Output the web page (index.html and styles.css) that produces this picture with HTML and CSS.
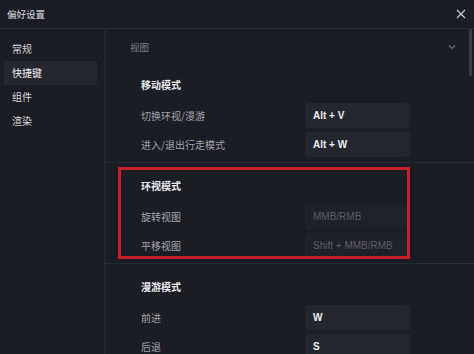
FILE: index.html
```html
<!DOCTYPE html>
<html lang="zh-CN">
<head>
  <meta charset="UTF-8">
  <title>偏好设置</title>
  <link rel="stylesheet" href="styles.css">
</head>
<body>
<div class="dialog">
  <div class="titlebar">
    <span class="title">偏好设置</span>
    <svg class="close" width="10" height="10" viewBox="0 0 10 10"><path d="M1 1L9 9M9 1L1 9" stroke="#c9cace" stroke-width="1.3"/></svg>
  </div>
  <div class="main">
    <div class="sidebar">
      <div class="nav-item">常规</div>
      <div class="nav-item active">快捷键</div>
      <div class="nav-item">组件</div>
      <div class="nav-item">渲染</div>
    </div>
    <div class="content">
      <div class="group-head">
        <span>视图</span>
        <svg width="8" height="6" viewBox="0 0 8 6"><path d="M1 1.5L4 4.5L7 1.5" fill="none" stroke="#6b6e76" stroke-width="1.1"/></svg>
      </div>
      <div class="section first">
        <div class="section-title">移动模式</div>
        <div class="row"><span class="label">切换环视/漫游</span><span class="key">Alt + V</span></div>
        <div class="row"><span class="label">进入/退出行走模式</span><span class="key">Alt + W</span></div>
      </div>
      <div class="section">
        <div class="section-title">环视模式</div>
        <div class="row"><span class="label">旋转视图</span><span class="key muted">MMB/RMB</span></div>
        <div class="row"><span class="label">平移视图</span><span class="key muted">Shift + MMB/RMB</span></div>
      </div>
      <div class="section last">
        <div class="section-title">漫游模式</div>
        <div class="row"><span class="label">前进</span><span class="key">W</span></div>
        <div class="row"><span class="label">后退</span><span class="key">S</span></div>
      </div>
      <div class="scrollbar"></div>
    </div>
  </div>
  <div class="highlight"></div>
</div>
</body>
</html>
```

FILE: styles.css
```css
body {
  margin: 0;
  background: #1b1d24;
  font-family: "Noto Sans CJK SC", "Noto Sans", sans-serif;
  font-size: 10px;
  color: #e4e5e8;
}
.dialog {
  position: relative;
  width: 474px;
  height: 354px;
  overflow: hidden;
}
.titlebar {
  height: 28px;
  display: flex;
  align-items: center;
  justify-content: space-between;
  padding: 0 7px;
  border-bottom: 1px solid #2a2c34;
}
.title {
  font-size: 9.5px;
  color: #dcdde0;
}
.close {
  margin-right: 1px;
}
.main {
  display: flex;
  height: 325px;
}
.sidebar {
  width: 104px;
  border-right: 1px solid #272930;
  padding-top: 8px;
}
.nav-item {
  height: 24px;
  line-height: 24px;
  margin: 0 7px 0 4px;
  padding-left: 8px;
  border-radius: 3px;
  color: #d6d7da;
}
.nav-item.active {
  background: #25272e;
  color: #eeeff1;
}
.content {
  position: relative;
  flex: 1;
  overflow: hidden;
}
.group-head {
  height: 36px;
  display: flex;
  align-items: center;
  justify-content: space-between;
  padding: 0 18px 0 25px;
  color: #7e8189;
  font-size: 9.5px;
}
.section {
  padding: 14px 0 5px 36px;
  border-bottom: 1px solid #2a2c34;
}
.section.first {
  padding-top: 11px;
}
.section.last {
  border-bottom: none;
}
.section-title {
  height: 18px;
  line-height: 18px;
  font-weight: bold;
  color: #e8e9ec;
  margin-bottom: 9px;
}
.row {
  display: flex;
  align-items: center;
  height: 25px;
  margin-bottom: 4px;
}
.row:last-child {
  margin-bottom: 0;
}
.label {
  width: 164px;
  color: #a3a5ab;
}
.key {
  width: 97px;
  height: 25px;
  line-height: 25px;
  padding-left: 8px;
  background: #24262d;
  border-radius: 3px;
  font-family: "Liberation Sans", Arial, sans-serif;
  font-weight: bold;
  font-size: 10px;
  color: #eceef0;
}
.key.muted {
  background: #1f2128;
  font-weight: normal;
  color: #5c5f66;
}
.scrollbar {
  position: absolute;
  right: 2px;
  top: 0;
  width: 3px;
  height: 47px;
  background: #3a3c44;
}
.highlight {
  position: absolute;
  left: 118px;
  top: 167px;
  width: 286px;
  height: 86px;
  border: 3px solid #c91f2a;
}
```
